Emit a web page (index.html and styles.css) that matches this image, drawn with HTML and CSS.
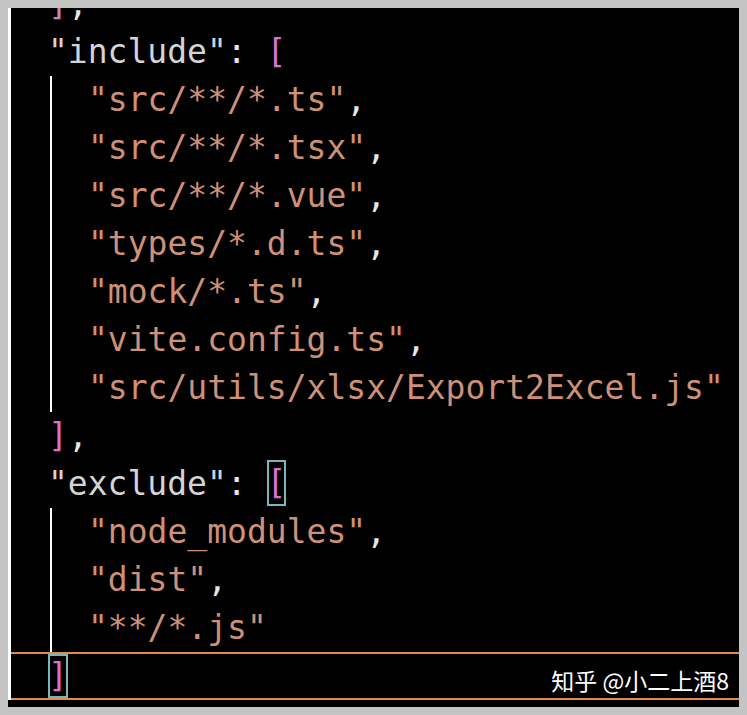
FILE: index.html
```html
<!DOCTYPE html>
<html lang="zh">
<head>
<meta charset="utf-8">
<link rel="stylesheet" href="styles.css">
</head>
<body>
<div class="panel">
  <div class="editor">
    <div class="code">
      <div class="line l1"><span class="br1">]</span><span class="p">,</span></div>
      <div class="line l1"><span class="k">"include"</span><span class="p">: </span><span class="br">[</span></div>
      <div class="block">
        <div class="line l2"><span class="s">"src/**/*.ts"</span><span class="p">,</span></div>
        <div class="line l2"><span class="s">"src/**/*.tsx"</span><span class="p">,</span></div>
        <div class="line l2"><span class="s">"src/**/*.vue"</span><span class="p">,</span></div>
        <div class="line l2"><span class="s">"types/*.d.ts"</span><span class="p">,</span></div>
        <div class="line l2"><span class="s">"mock/*.ts"</span><span class="p">,</span></div>
        <div class="line l2"><span class="s">"vite.config.ts"</span><span class="p">,</span></div>
        <div class="line l2"><span class="s">"src/utils/xlsx/Export2Excel.js"</span></div>
      </div>
      <div class="line l1"><span class="br">]</span><span class="p">,</span></div>
      <div class="line l1"><span class="k">"exclude"</span><span class="p">: </span><span class="br match">[</span></div>
      <div class="block">
        <div class="line l2"><span class="s">"node_modules"</span><span class="p">,</span></div>
        <div class="line l2"><span class="s">"dist"</span><span class="p">,</span></div>
        <div class="line l2"><span class="s">"**/*.js"</span></div>
      </div>
      <div class="line l1 current"><span class="br match">]</span><span class="mark">知乎 @小二上酒8</span></div>
    </div>
  </div>
</div>
</body>
</html>
```
FILE: styles.css
```css
html, body {
  margin: 0;
  padding: 0;
  background: #c4c4c4;
}
body {
  padding: 8px;
  width: 747px;
  height: 715px;
  box-sizing: border-box;
}
.panel {
  width: 731px;
  height: 699px;
  background: #000;
  overflow: hidden;
}
.editor {
  height: 692px;
  border-left: 3px solid #ffffff;
  overflow: hidden;
}
.code {
  margin-top: -28px;
  font-family: "DejaVu Sans Mono", "Liberation Mono", monospace;
  font-size: 33px;
  color: #d4d4d4;
}
.line {
  height: 48px;
  line-height: 48px;
  box-sizing: border-box;
  white-space: pre;
}
.l1 {
  padding-left: 37px;
}
.block {
  margin-left: 39px;
  border-left: 2px solid #ffffff;
}
.l2 {
  padding-left: 36px;
}
.k { color: #d4d4d4; }
.p { color: #e6e6e6; }
.s { color: #ce9178; }
.br { color: #da70d6; }
.br1 { color: #c586c0; }
.match {
  display: inline-block;
  height: 46px;
  line-height: 46px;
  vertical-align: top;
  box-shadow: inset 0 0 0 2px #78b6bf;
}
.current {
  display: flex;
  align-items: flex-start;
  border-top: 2px solid #e38a4d;
  border-bottom: 2px solid #e38a4d;
  line-height: 44px;
}
.current .match {
  height: 44px;
  line-height: 44px;
}
.mark {
  margin-left: auto;
  align-self: center;
  padding-right: 10px;
  padding-top: 8px;
  font-family: "Noto Sans CJK SC", "Noto Sans", sans-serif;
  font-size: 23px;
  line-height: 26px;
  color: #ffffff;
  white-space: nowrap;
}
```
